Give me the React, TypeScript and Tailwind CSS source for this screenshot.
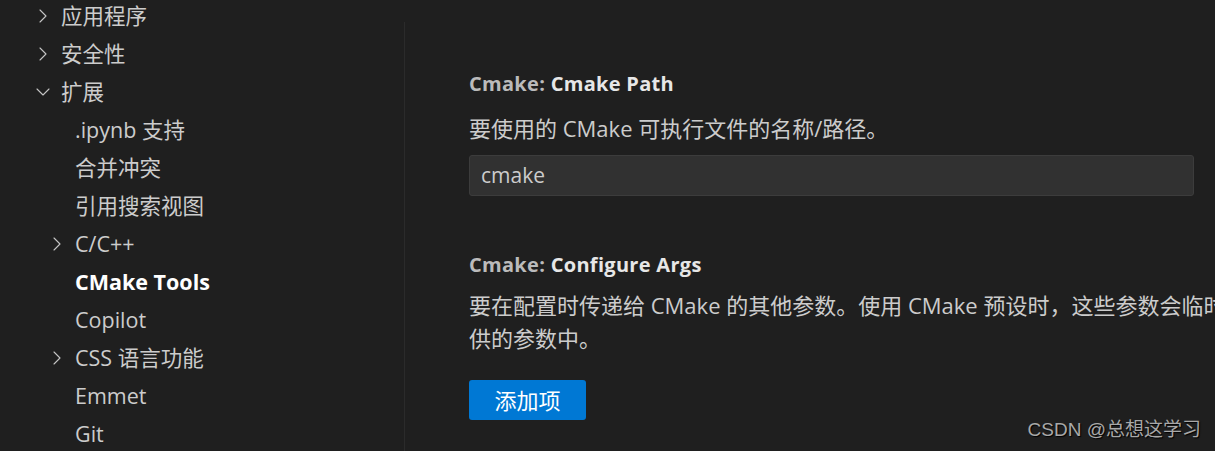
import { ChevronRight, ChevronDown } from "lucide-react"

interface NavItem {
  label: string
  depth: number
  chevron?: "right" | "down"
  active?: boolean
}

const items: NavItem[] = [
  { label: "应用程序", depth: 0, chevron: "right" },
  { label: "安全性", depth: 0, chevron: "right" },
  { label: "扩展", depth: 0, chevron: "down" },
  { label: ".ipynb 支持", depth: 1 },
  { label: "合并冲突", depth: 1 },
  { label: "引用搜索视图", depth: 1 },
  { label: "C/C++", depth: 1, chevron: "right" },
  { label: "CMake Tools", depth: 1, active: true },
  { label: "Copilot", depth: 1 },
  { label: "CSS 语言功能", depth: 1, chevron: "right" },
  { label: "Emmet", depth: 1 },
  { label: "Git", depth: 1 },
]

const font = "font-['Open_Sans','Noto_Sans_CJK_SC',sans-serif]"

export default function App() {
  return (
    <div className={`flex h-[451px] w-[1215px] overflow-hidden bg-[#1f1f1f] text-[#cccccc] ${font}`}>
      {/* sidebar */}
      <div className="flex w-[404px] shrink-0 flex-col">
        <div className="-mt-[3px] flex flex-col">
          {items.map((item) => (
            <div
              key={item.label}
              className={`flex h-[38px] items-center text-[21.5px] ${item.depth === 0 ? "pl-[31px]" : "pl-[45px]"}`}
            >
              <span className="flex w-[30px] shrink-0 items-center">
                {item.chevron === "right" && <ChevronRight size={24} strokeWidth={1.1} className="text-[#c5c5c5]" />}
                {item.chevron === "down" && <ChevronDown size={24} strokeWidth={1.1} className="text-[#c5c5c5]" />}
              </span>
              <span className={item.active ? "font-bold text-white" : ""}>{item.label}</span>
            </div>
          ))}
        </div>
      </div>

      {/* divider */}
      <div className="mt-[22px] w-px shrink-0 bg-[#2b2b2b]" />

      {/* settings */}
      <div className="relative flex-1 overflow-hidden pl-[64px] pt-[69px]">
        <div className="flex flex-col">
          <div className="text-[20px] font-bold leading-[30px] tracking-[0.3px]">
            <span className="text-[#bbbbbb]">Cmake: </span>
            <span className="text-[#e7e7e7]">Cmake Path</span>
          </div>
          <div className="mt-[14px] text-[22px] leading-[30px]">要使用的 CMake 可执行文件的名称/路径。</div>
          <div className="mt-[12px] flex h-[41px] w-[725px] items-center rounded-[3px] border border-[#3c3c3c] bg-[#313131] px-[11px] text-[21px] text-[#cccccc]">
            cmake
          </div>

          <div className="mt-[54px] text-[20px] font-bold leading-[30px] tracking-[0.3px]">
            <span className="text-[#bbbbbb]">Cmake: </span>
            <span className="text-[#e7e7e7]">Configure Args</span>
          </div>
          <div className="mt-[9px] whitespace-nowrap text-[22px] leading-[33px]">
            <div>要在配置时传递给 CMake 的其他参数。使用 CMake 预设时，这些参数会临时添加到活动配置预设提</div>
            <div>供的参数中。</div>
          </div>
          <div className="mt-[25px]">
            <button className="flex h-[40px] w-[117px] items-center justify-center rounded-[3px] bg-[#0078d4] text-[22px] text-white">
              添加项
            </button>
          </div>
        </div>

        <div className="absolute bottom-[7px] right-[14px] text-[19px] text-[#a8a8a8] [text-shadow:1px_1px_1px_#000] font-['Liberation_Sans','Noto_Sans_CJK_SC',sans-serif]">
          CSDN @总想这学习
        </div>
      </div>
    </div>
  )
}
